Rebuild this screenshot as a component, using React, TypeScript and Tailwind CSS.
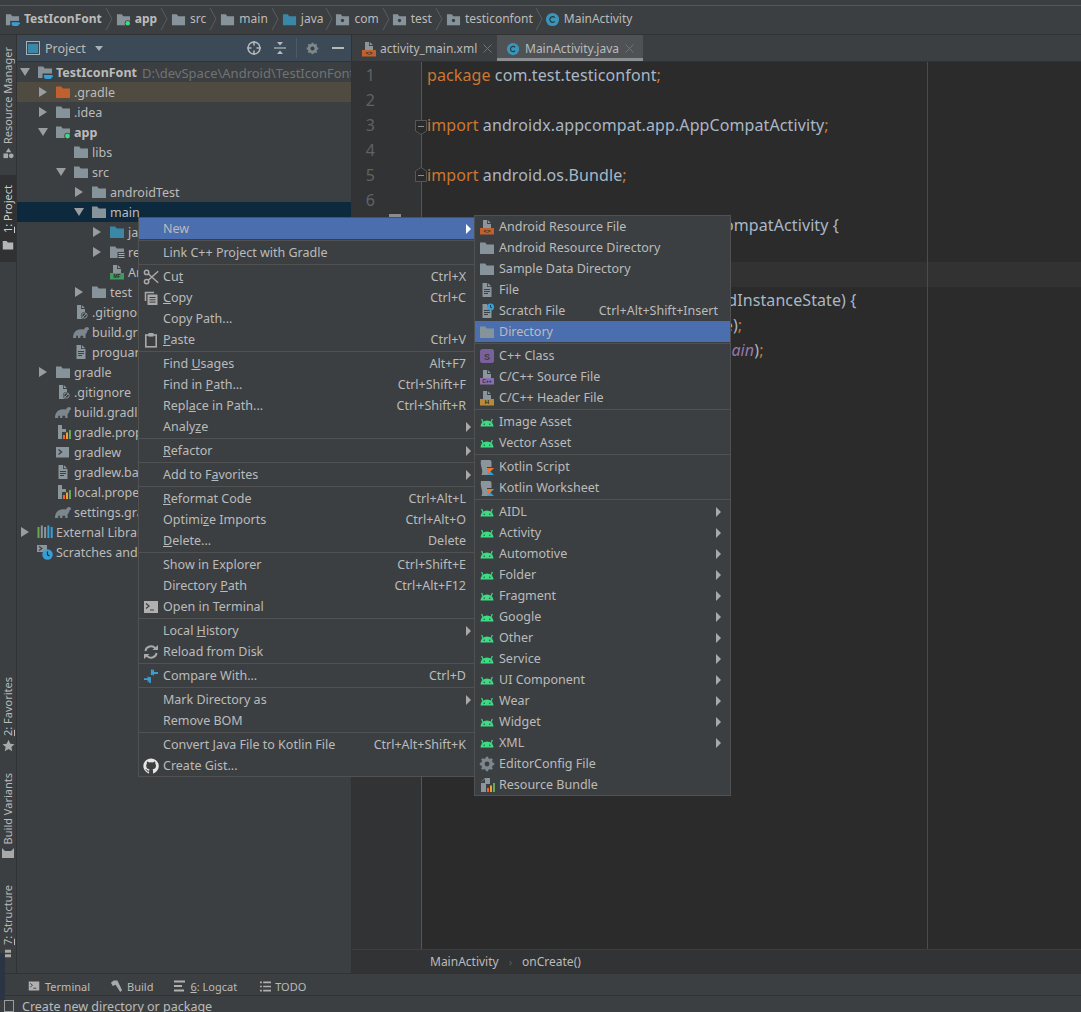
import React from "react";

type Kind =
  | "folder" | "blue" | "orange" | "pkg" | "res" | "module" | "root" | "manifest" | "ignore" | "gradle" | "doc"
  | "props" | "shell" | "libs" | "scratch" | "xml" | "cls" | "scratchFile" | "cppClass" | "cppSrc" | "cppHdr"
  | "android" | "kotlin" | "gear" | "bundle" | "cut" | "copy" | "paste" | "terminal" | "reload" | "compare" | "github";

const PageShape = ({fill = "#8a959c"}: {fill?: string}) => (
  <path d="M4 1h4v4h4V1.5L12 1v8H4zM8.8 1l3 3H8.8z" fill={fill} />
);

const FolderShape = ({fill = "#87939a"}: {fill?: string}) => (
  <path d="M1 2.5h5.2l1.5 2H15V14H1z" fill={fill} />
);

const DocLines = () => (
  <>
    <path d="M3.5 1H8v4h4.5v10h-9z" fill="#8a959c" />
    <path d="M8.8 1l3.5 3.3H8.8z" fill="#8a959c" />
    <path d="M5 7.5h6M5 9.5h6M5 11.5h4" stroke="#3c3f41" strokeWidth="1" />
  </>
);

const Bars = () => (
  <>
    <rect x="8" y="11" width="2" height="4" fill="#f26522" />
    <rect x="11" y="8.5" width="2" height="6.5" fill="#e8a33d" />
    <rect x="14" y="6" width="2" height="9" fill="#6aa84f" />
  </>
);

const Cup = () => (
  <>
    <path d="M7 11h8v1.5a2.5 2.5 0 0 1-2.5 2.5h-3A2.5 2.5 0 0 1 7 12.5z" fill="#389fd6" />
    <path d="M15 11.5h1.4v1.6H15z" fill="#389fd6" />
  </>
);

const Badge = ({fill, label, size = 5}: {fill: string; label: string; size?: number}) => (
  <>
    <PageShape />
    <rect x="1" y="9" width="14" height="6.5" fill={fill} />
    <text x="8" y="14.3" textAnchor="middle" fontSize={size} fontWeight="700" fill="#2b2b2b" fontFamily="Liberation Sans, sans-serif">
      {label}
    </text>
  </>
);

const Icon = ({kind, className = "w-[16px] h-[16px]"}: {kind: Kind; className?: string}) => {
  let body: React.ReactNode = null;
  switch (kind) {
    case "folder":
      body = <FolderShape />;
      break;
    case "blue":
      body = <FolderShape fill="#3b87a8" />;
      break;
    case "orange":
      body = <FolderShape fill="#c0602e" />;
      break;
    case "pkg":
      body = (
        <>
          <FolderShape />
          <circle cx="8" cy="9" r="1.8" fill="#3c3f41" />
        </>
      );
      break;
    case "res":
      body = (
        <>
          <FolderShape />
          <rect x="8.5" y="8" width="7.5" height="7.5" fill="#3c3f41" />
          <path d="M9.5 9.5h6M9.5 11.5h6M9.5 13.5h6" stroke="#e8a33d" strokeWidth="1.1" />
        </>
      );
      break;
    case "module":
      body = (
        <>
          <FolderShape />
          <circle cx="12.5" cy="12" r="3.2" fill="#3c3f41" />
          <circle cx="12.5" cy="12" r="2.4" fill="#3ddc84" />
        </>
      );
      break;
    case "root":
      body = (
        <>
          <FolderShape />
          <rect x="5.5" y="9.5" width="11" height="6.5" fill="#3c3f41" />
          <Cup />
        </>
      );
      break;
    case "manifest":
      body = <Badge fill="#3f9c5f" label="MF" />;
      break;
    case "ignore":
      body = (
        <>
          <PageShape />
          <path d="M4 8h6v7H4z" fill="#8a959c" />
          <circle cx="11.5" cy="11.5" r="3.6" fill="#3c3f41" />
          <circle cx="11.5" cy="11.5" r="2.7" fill="none" stroke="#8a959c" strokeWidth="1" />
          <path d="M9.7 13.4l3.6-3.8" stroke="#8a959c" strokeWidth="1" />
        </>
      );
      break;
    case "gradle":
      body = (
        <path
          d="M0 14c0-3 .8-6 3.4-7.6C6 5 8.6 5 11 5.5c.6-1.5 1.6-2.6 3-2.6 1.2 0 2 .8 2 1.9 0 .8-.5 1.4-1.4 1.4-.3 1.7-1 3-2 4V14h-2.4v-2.2H7.4V14H5v-2.3H3.2V14z"
          fill="#7b868d"
        />
      );
      break;
    case "doc":
      body = <DocLines />;
      break;
    case "props":
      body = (
        <>
          <path d="M3 1h4v4h4V1L11 5v3H7v7H3z" fill="#8a959c" />
          <Bars />
        </>
      );
      break;
    case "shell":
      body = (
        <>
          <rect x="1" y="3" width="13" height="10.5" fill="#8a959c" />
          <path d="M3.5 5.5l3 2.5-3 2.5" stroke="#3c3f41" strokeWidth="1.4" fill="none" />
        </>
      );
      break;
    case "libs":
      body = (
        <>
          <rect x="0.5" y="3" width="2" height="11" fill="#6aa84f" />
          <rect x="3.8" y="1.5" width="2" height="12.5" fill="#8a959c" />
          <rect x="7.1" y="3" width="2" height="11" fill="#8a959c" />
          <rect x="10.4" y="1.5" width="2" height="12.5" fill="#389fd6" />
          <rect x="13.7" y="3" width="2" height="11" fill="#389fd6" />
        </>
      );
      break;
    case "scratch":
      body = (
        <>
          <path d="M0 1h10v7H0z" fill="#8a959c" />
          <path d="M2 2.5l3 2-3 2" stroke="#3c3f41" strokeWidth="1.1" fill="none" />
          <circle cx="10.5" cy="10.5" r="5.2" fill="#389fd6" />
          <path d="M10.5 7.5v3.3l2 1.2" stroke="#2b2b2b" strokeWidth="1.2" fill="none" />
        </>
      );
      break;
    case "xml":
      body = <Badge fill="#c0602e" label="<>" size={6} />;
      break;
    case "cls":
      body = (
        <>
          <circle cx="8" cy="8" r="7" fill="#3a95b8" />
          <path d="M10.4 6a3 3 0 1 0 0 4" stroke="#2b3a42" strokeWidth="1.3" fill="none" />
        </>
      );
      break;
    case "scratchFile":
      body = (
        <>
          <DocLines />
          <circle cx="11.5" cy="4" r="3.6" fill="#389fd6" />
          <path d="M11.5 2v2.2l1.4.8" stroke="#2b2b2b" strokeWidth="0.9" fill="none" />
        </>
      );
      break;
    case "cppClass":
      body = (
        <>
          <rect x="1" y="1" width="14" height="14" rx="2.5" fill="#7a619c" />
          <text x="8" y="11.5" textAnchor="middle" fontSize="9" fontWeight="700" fill="#3c3f41" fontFamily="Liberation Sans, sans-serif">
            S
          </text>
        </>
      );
      break;
    case "cppSrc":
      body = <Badge fill="#8a6fb0" label="C++" />;
      break;
    case "cppHdr":
      body = <Badge fill="#b98a3c" label="H" size={6} />;
      break;
    case "android":
      body = (
        <>
          <path d="M1.500 12.500a6.500 6 0 0 1 13 0z" fill="#3ddc84" />
          <path d="M4 8L2.600 5M12 8l1.400-3" stroke="#3ddc84" strokeWidth="1.200" />
          <circle cx="5.200" cy="10.300" r="0.700" fill="#3c3f41" />
          <circle cx="10.800" cy="10.300" r="0.700" fill="#3c3f41" />
        </>
      );
      break;
    case "kotlin":
      body = (
        <>
          <path d="M2 1h8.5c1.5 0 2 1 2 2v5H8v8H2.5c.5-2 1-3 .5-5.5C2.6 8 1 5 2 1z" fill="#8a959c" />
          <path d="M8 9h7l-3.5 3.5L15 16H8z" fill="#389fd6" />
          <path d="M8 9h6.8L8 15.5z" fill="#f0752c" />
        </>
      );
      break;
    case "gear":
      body = (
        <>
          <circle cx="8" cy="8" r="4.4" fill="none" stroke="#7c878e" strokeWidth="3" />
          <path d="M8 0.8v14.4M0.8 8h14.4M2.9 2.9l10.2 10.2M13.1 2.9L2.9 13.1" stroke="#7c878e" strokeWidth="2.4" />
          <circle cx="8" cy="8" r="2.4" fill="#3c3f41" />
        </>
      );
      break;
    case "bundle":
      body = (
        <>
          <path d="M2 15V5l4-4h5v6H7v8z" fill="#8a959c" />
          <path d="M1 6h5V2z" fill="#3c3f41" />
          <Bars />
        </>
      );
      break;
    case "cut":
      body = (
        <>
          <circle cx="3.6" cy="3.4" r="2.2" fill="none" stroke="#a9a9a9" strokeWidth="1.5" />
          <circle cx="3.6" cy="12.6" r="2.2" fill="none" stroke="#a9a9a9" strokeWidth="1.5" />
          <path d="M5.2 4.8l10 9M5.2 11.2l10-9" stroke="#a9a9a9" strokeWidth="1.5" />
        </>
      );
      break;
    case "copy":
      body = (
        <>
          <path d="M2.5 11V2.5H11" stroke="#a9a9a9" strokeWidth="1.5" fill="none" />
          <rect x="4.5" y="4.5" width="10" height="10.5" fill="#a9a9a9" />
          <path d="M6.5 7.5h6M6.5 9.8h6M6.5 12.1h6" stroke="#3c3f41" strokeWidth="1" />
        </>
      );
      break;
    case "paste":
      body = (
        <>
          <rect x="2.8" y="3" width="10.4" height="11.8" fill="none" stroke="#a9a9a9" strokeWidth="1.6" />
          <rect x="5.5" y="1" width="5" height="3.6" fill="#a9a9a9" />
        </>
      );
      break;
    case "terminal":
      body = (
        <>
          <rect x="1" y="2" width="14" height="12" fill="#b0b0b0" />
          <path d="M3 4.5l3 2.5-3 2.5M7 11h4" stroke="#3c3f41" strokeWidth="1.2" fill="none" />
        </>
      );
      break;
    case "reload":
      body = (
        <>
          <path d="M2.4 7a5.7 5.7 0 0 1 10-2.6M13.6 9a5.7 5.7 0 0 1-10 2.6" stroke="#a9a9a9" strokeWidth="1.9" fill="none" />
          <path d="M9.5 6h5.5V1zM6.5 10H1v5z" fill="#a9a9a9" />
        </>
      );
      break;
    case "compare":
      body = (
        <>
          <path d="M8.8 7V1.5M8.8 5h6.2" stroke="#389fd6" strokeWidth="1.8" />
          <path d="M11 1l-3 3.8L11 8z" fill="#389fd6" />
          <path d="M7 15V9M1 11.2h5.5" stroke="#389fd6" strokeWidth="1.8" />
          <path d="M4.6 8l3 3.2-3 3.2z" fill="#389fd6" />
        </>
      );
      break;
    case "github":
      body = (
        <path
          d="M8 .4a7.7 7.7 0 0 0-2.4 15c.4.1.5-.2.5-.4v-1.4c-2.1.5-2.6-1-2.6-1-.3-.9-.8-1.100-.8-1.100-.7-.5.100-.5.100-.5.800.100 1.200.8 1.200.8.700 1.200 1.800.8 2.200.6.100-.5.300-.8.500-1-1.700-.2-3.500-.9-3.500-3.800 0-.8.300-1.500.8-2-.1-.2-.3-1 .1-2 0 0 .6-.2 2.100.8a7.300 7.300 0 0 1 3.800 0c1.500-1 2.100-.8 2.100-.8.400 1 .2 1.800.1 2 .5.500.8 1.200.8 2 0 2.900-1.800 3.600-3.500 3.800.3.200.5.700.5 1.400V15c0 .2.100.5.500.4A7.700 7.700 0 0 0 8 .4z"
          fill="#e6e6e6"
        />
      );
      break;
  }
  return (
    <svg viewBox="0 0 16 16" className={`shrink-0 ${className}`}>
      {body}
    </svg>
  );
};

const Arrow = ({open}: {open?: boolean}) =>
  open ? (
    <svg viewBox="0 0 10 8" className="w-[10px] h-[8px]">
      <path d="M0 0h10L5 8z" fill="#9a9da0" />
    </svg>
  ) : (
    <svg viewBox="0 0 8 10" className="w-[8px] h-[10px] ml-[1px]">
      <path d="M0 0v10l8-5z" fill="#9a9da0" />
    </svg>
  );

interface TreeRow {
  label: string;
  level: number;
  icon: Kind;
  arrow?: "open" | "closed";
  bold?: boolean;
  hint?: string;
  bg?: string;
}

const tree: TreeRow[] = [
  {label: "TestIconFont", level: 0, icon: "root", arrow: "open", bold: true, hint: "D:\\devSpace\\Android\\TestIconFont"},
  {label: ".gradle", level: 1, icon: "orange", arrow: "closed", bg: "bg-[#4f4b41]"},
  {label: ".idea", level: 1, icon: "folder", arrow: "closed"},
  {label: "app", level: 1, icon: "module", arrow: "open", bold: true},
  {label: "libs", level: 2, icon: "folder"},
  {label: "src", level: 2, icon: "folder", arrow: "open"},
  {label: "androidTest", level: 3, icon: "folder", arrow: "closed"},
  {label: "main", level: 3, icon: "folder", arrow: "open", bg: "bg-[#0d293e]"},
  {label: "java", level: 4, icon: "blue", arrow: "closed"},
  {label: "res", level: 4, icon: "res", arrow: "closed"},
  {label: "AndroidManifest.xml", level: 4, icon: "manifest"},
  {label: "test", level: 3, icon: "folder", arrow: "closed"},
  {label: ".gitignore", level: 2, icon: "ignore"},
  {label: "build.gradle", level: 2, icon: "gradle"},
  {label: "proguard-rules.pro", level: 2, icon: "doc"},
  {label: "gradle", level: 1, icon: "folder", arrow: "closed"},
  {label: ".gitignore", level: 1, icon: "ignore"},
  {label: "build.gradle", level: 1, icon: "gradle"},
  {label: "gradle.properties", level: 1, icon: "props"},
  {label: "gradlew", level: 1, icon: "shell"},
  {label: "gradlew.bat", level: 1, icon: "doc"},
  {label: "local.properties", level: 1, icon: "props"},
  {label: "settings.gradle", level: 1, icon: "gradle"},
  {label: "External Libraries", level: 0, icon: "libs", arrow: "closed"},
  {label: "Scratches and Consoles", level: 0, icon: "scratch"},
];

const indents = ["pl-0", "pl-[18px]", "pl-[36px]", "pl-[54px]", "pl-[72px]"];

interface MenuEntry {
  label: React.ReactNode;
  icon?: Kind;
  shortcut?: string;
  arrow?: boolean;
  selected?: boolean;
}

const SEP = "sep" as const;
type MenuLine = MenuEntry | typeof SEP;

const contextMenu: MenuLine[] = [
  {label: "New", arrow: true, selected: true},
  SEP,
  {label: "Link C++ Project with Gradle"},
  SEP,
  {label: <>Cu<u>t</u></>, icon: "cut", shortcut: "Ctrl+X"},
  {label: <><u>C</u>opy</>, icon: "copy", shortcut: "Ctrl+C"},
  {label: "Copy Path..."},
  {label: <><u>P</u>aste</>, icon: "paste", shortcut: "Ctrl+V"},
  SEP,
  {label: <>Find <u>U</u>sages</>, shortcut: "Alt+F7"},
  {label: <>Find in <u>P</u>ath...</>, shortcut: "Ctrl+Shift+F"},
  {label: <>Repl<u>a</u>ce in Path...</>, shortcut: "Ctrl+Shift+R"},
  {label: <>Analy<u>z</u>e</>, arrow: true},
  SEP,
  {label: <><u>R</u>efactor</>, arrow: true},
  SEP,
  {label: <>Add to F<u>a</u>vorites</>, arrow: true},
  SEP,
  {label: <><u>R</u>eformat Code</>, shortcut: "Ctrl+Alt+L"},
  {label: <>Optimi<u>z</u>e Imports</>, shortcut: "Ctrl+Alt+O"},
  {label: <><u>D</u>elete...</>, shortcut: "Delete"},
  SEP,
  {label: "Show in Explorer", shortcut: "Ctrl+Shift+E"},
  {label: <>Directory <u>P</u>ath</>, shortcut: "Ctrl+Alt+F12"},
  {label: "Open in Terminal", icon: "terminal"},
  SEP,
  {label: <>Local <u>H</u>istory</>, arrow: true},
  {label: "Reload from Disk", icon: "reload"},
  SEP,
  {label: "Compare With...", icon: "compare", shortcut: "Ctrl+D"},
  SEP,
  {label: "Mark Directory as", arrow: true},
  {label: "Remove BOM"},
  SEP,
  {label: "Convert Java File to Kotlin File", shortcut: "Ctrl+Alt+Shift+K"},
  {label: "Create Gist...", icon: "github"},
];

const newMenu: MenuLine[] = [
  {label: "Android Resource File", icon: "xml"},
  {label: "Android Resource Directory", icon: "folder"},
  {label: "Sample Data Directory", icon: "folder"},
  {label: "File", icon: "doc"},
  {label: "Scratch File", icon: "scratchFile", shortcut: "Ctrl+Alt+Shift+Insert"},
  {label: "Directory", icon: "folder", selected: true},
  SEP,
  {label: "C++ Class", icon: "cppClass"},
  {label: "C/C++ Source File", icon: "cppSrc"},
  {label: "C/C++ Header File", icon: "cppHdr"},
  SEP,
  {label: "Image Asset", icon: "android"},
  {label: "Vector Asset", icon: "android"},
  SEP,
  {label: "Kotlin Script", icon: "kotlin"},
  {label: "Kotlin Worksheet", icon: "kotlin"},
  SEP,
  {label: "AIDL", icon: "android", arrow: true},
  {label: "Activity", icon: "android", arrow: true},
  {label: "Automotive", icon: "android", arrow: true},
  {label: "Folder", icon: "android", arrow: true},
  {label: "Fragment", icon: "android", arrow: true},
  {label: "Google", icon: "android", arrow: true},
  {label: "Other", icon: "android", arrow: true},
  {label: "Service", icon: "android", arrow: true},
  {label: "UI Component", icon: "android", arrow: true},
  {label: "Wear", icon: "android", arrow: true},
  {label: "Widget", icon: "android", arrow: true},
  {label: "XML", icon: "android", arrow: true},
  {label: "EditorConfig File", icon: "gear"},
  {label: "Resource Bundle", icon: "bundle"},
];

const MenuArrow = ({light}: {light?: boolean}) => (
  <svg viewBox="0 0 5 10" className="w-[5px] h-[10px] shrink-0">
    <path d="M0 0v10l5-5z" fill={light ? "#ffffff" : "#a9a9a9"} />
  </svg>
);

const PopupMenu = ({lines, className, sub}: {lines: MenuLine[]; className: string; sub?: boolean}) => (
  <div className={`absolute bg-[#3c3f41] border border-[#515151] ${className}`}>
    {lines.map((line, i) =>
      line === SEP ? (
        <div key={i} className="h-[3px] flex items-center">
          <div className="h-px w-full bg-[#515151]" />
        </div>
      ) : (
        <div key={i} className={`h-[21px] flex items-center pr-[4px] ${line.selected ? "bg-[#4b6eaf]" : ""}`}>
          <span className="w-[24px] flex justify-center shrink-0">
            {line.icon && <Icon kind={line.icon} className="w-[16px] h-[16px]" />}
          </span>
          <span className="flex-1 whitespace-nowrap pt-[2px]">{line.label}</span>
          {line.shortcut && <span className={`whitespace-nowrap pt-[2px] ${sub ? "mr-[8px]" : "mr-[5px]"}`}>{line.shortcut}</span>}
          {line.arrow && <span className={sub ? "mr-[5px]" : "mr-0"}><MenuArrow light={line.selected} /></span>}
        </div>
      ),
    )}
  </div>
);

const Crumb = ({label, icon, bold}: {label: string; icon: Kind; bold?: boolean}) => (
  <div className="flex items-center">
    <Icon kind={icon} className="w-[15px] h-[15px] mr-[4px]" />
    <span className={bold ? "font-bold" : ""}>{label}</span>
  </div>
);

const CrumbSep = ({className = "mx-[3px]"}: {className?: string}) => (
  <svg viewBox="0 0 8 24" className={`w-[8px] h-[24px] ${className}`}>
    <path d="M1 1l6 11-6 11" stroke="#5a5d5f" fill="none" />
  </svg>
);

const TabClose = () => (
  <svg viewBox="0 0 9 9" className="w-[9px] h-[9px] ml-[6px]">
    <path d="M.5.5l8 8M8.500.5l-8 8" stroke="#6f7376" />
  </svg>
);

const V = "[writing-mode:vertical-rl] rotate-180 whitespace-nowrap mr-[2px]";

const SideStripe = () => (
  <div className="w-[17px] shrink-0 border-r border-[#323232] flex flex-col justify-between items-stretch text-[11px] leading-none">
    <div className="flex flex-col">
      <div className="pt-[12px] h-[140px] flex flex-col items-center">
        <span className={V}>Resource Manager</span>
        <svg viewBox="0 0 12 12" className="w-[11px] h-[11px] mt-[4px]">
          <path d="M6 0l3 4.500H3z" fill="#a9a9a9" />
          <rect x="0.500" y="6" width="5" height="5" fill="#a9a9a9" />
          <circle cx="9" cy="8.500" r="2.600" fill="#a9a9a9" />
        </svg>
      </div>
      <div className="h-[87px] bg-[#2f3133] pt-[10px] flex flex-col items-center text-[#d0d0d0]">
        <span className={V}>
          <u>1</u>: Project
        </span>
        <svg viewBox="0 0 16 16" className="w-[12px] h-[12px] mt-[6px]">
          <path d="M1 2.500h5.200l1.500 2H15V14H1z" fill="#b5b5b5" />
        </svg>
      </div>
    </div>
    <div className="flex flex-col items-center pb-[15px]">
      <span className={V}>
        <u>2</u>: Favorites
      </span>
      <svg viewBox="0 0 16 16" className="w-[13px] h-[13px] mt-[3px]">
        <path d="M8 1l2.200 4.800 5.200.6-3.900 3.500 1.100 5.200L8 12.400l-4.600 2.700 1.100-5.200L.6 6.400l5.200-.6z" fill="#a9a9a9" />
      </svg>
      <span className={`${V} mt-[21px]`}>Build Variants</span>
      <svg viewBox="0 0 12 10" className="w-[12px] h-[10px] mt-[4px]">
        <path d="M0 0l3 3h6l3-3v10H0z" fill="#a9a9a9" />
      </svg>
      <span className={`${V} mt-[27px]`}>
        <u>7</u>: Structure
      </span>
      <svg viewBox="0 0 8 10" className="w-[6px] h-[9px] mt-[4px]">
        <rect x="0" y="0" width="8" height="4" fill="#a9a9a9" />
        <rect x="0" y="6" width="8" height="4" fill="#a9a9a9" />
      </svg>
    </div>
  </div>
);

const ProjectPanel = () => (
  <div className="w-[334px] shrink-0 flex flex-col">
    <div className="h-[27px] bg-[#3c4a57] flex items-center pl-[9px] pr-[7px] border-b border-[#323232]">
      <svg viewBox="0 0 14 14" className="w-[14px] h-[14px] mr-[5px]">
        <rect x="0.500" y="0.500" width="13" height="13" fill="none" stroke="#a9b0b5" />
        <rect x="2" y="3" width="10" height="9" fill="#3b87a8" />
      </svg>
      <span className="pt-[2px]">Project</span>
      <svg viewBox="0 0 8 5" className="w-[8px] h-[5px] ml-[9px]">
        <path d="M0 0h8L4 5z" fill="#a9b0b5" />
      </svg>
      <div className="flex-1" />
      <svg viewBox="0 0 14 14" className="w-[14px] h-[14px]">
        <circle cx="7" cy="7" r="6" fill="none" stroke="#b5b8ba" strokeWidth="1.500" />
        <path d="M7 0v4.500M7 9.500V14M0 7h4.500M9.500 7H14" stroke="#b5b8ba" strokeWidth="1.500" />
      </svg>
      <svg viewBox="0 0 14 14" className="w-[14px] h-[14px] ml-[12px]">
        <path d="M1 7h12" stroke="#b5b8ba" strokeWidth="1.200" />
        <path d="M4 1l3 3.500L10 1zM4 13l3-3.500 3 3.500z" fill="#b5b8ba" />
      </svg>
      <div className="w-px h-[20px] bg-[#4d5963] mx-[9px]" />
      <Icon kind="gear" className="w-[13px] h-[13px]" />
      <div className="w-[12px] h-[2px] bg-[#b5b8ba] ml-[13px]" />
    </div>
    <div className="flex flex-col">
      {tree.map((row, i) => (
        <div key={i} className={`h-[20px] flex items-center whitespace-nowrap ${row.bg ?? ""}`}>
          <div className={`flex items-center ${indents[row.level]}`}>
            <span className="w-[20px] pl-[3px] flex items-center shrink-0">
              {row.arrow && <Arrow open={row.arrow === "open"} />}
            </span>
            <span className="w-[19px] shrink-0">
              <Icon kind={row.icon} className="w-[16px] h-[16px]" />
            </span>
            <span className={`pt-[2px] ${row.bold ? "font-bold" : ""}`}>{row.label}</span>
            {row.hint && <span className="ml-[5px] pt-[2px] text-[13px] text-[#6f7376]">{row.hint}</span>}
          </div>
        </div>
      ))}
    </div>
  </div>
);

const Kw = ({children}: {children: React.ReactNode}) => <span className="text-[#cc7832]">{children}</span>;

const codeLines: {content: React.ReactNode; indent?: string; current?: boolean}[] = [
  {content: <><Kw>package</Kw> com.test.testiconfont<Kw>;</Kw></>},
  {content: ""},
  {content: <><Kw>import</Kw> androidx.appcompat.app.AppCompatActivity<Kw>;</Kw></>},
  {content: ""},
  {content: <><Kw>import</Kw> android.os.Bundle<Kw>;</Kw></>},
  {content: ""},
  {content: <><Kw>public class</Kw> MainActivity <Kw>extends</Kw> AppCompatActivity {"{"}</>, indent: "pl-[4px]"},
  {content: ""},
  {content: "", current: true},
  {content: <><Kw>protected void</Kw> onCreate(Bundle savedInstanceState) {"{"}</>, indent: "pl-[19px]"},
  {content: <><Kw>super</Kw>.onCreate(savedInstanceState)<Kw>;</Kw></>, indent: "pl-[38px]"},
  {content: <>setContentView(R.layout.<i className="text-[#9876aa]">activity_main</i>)<Kw>;</Kw></>, indent: "pl-[43px]"},
];

const FoldMark = ({up}: {up?: boolean}) => (
  <svg viewBox="0 0 12 15" className={`absolute left-[-7px] w-[12px] h-[15px] ${up ? "top-[5px]" : "top-[8px]"}`}>
    <path
      d={up ? "M.5 14.500V4L6 .5 11.500 4v10.500z" : "M.5.5h11V11L6 14.500.5 11z"}
      fill="#2b2b2b"
      stroke="#555759"
    />
    <path d={up ? "M3 8.500h6" : "M3 6.500h6"} stroke="#8a8d8f" />
  </svg>
);

const Editor = () => (
  <div className="flex-1 min-w-0 flex flex-col border-l border-[#323232]">
    <div className="h-[27px] flex items-stretch shrink-0 border-b border-[#323232] text-[12px]">
      <div className="w-[145px] flex items-center pl-[9px] pt-[1px]">
        <Icon kind="xml" className="w-[16px] h-[16px] mr-[3px]" />
        <span>activity_main.xml</span>
        <TabClose />
      </div>
      <div className="w-[146px] relative flex items-center pl-[9px] pt-[1px] bg-[#4e5254]">
        <Icon kind="cls" className="w-[14px] h-[14px] mr-[5px]" />
        <span>MainActivity.java</span>
        <TabClose />
        <div className="absolute left-0 right-0 bottom-0 h-[3px] bg-[#8c8f91]" />
      </div>
    </div>
    <div className="flex-1 flex min-h-0 bg-[#2b2b2b] relative text-[16px] leading-[27px] text-[#a9b7c6]">
      <div className="w-[70px] shrink-0 bg-[#313335] border-r border-[#555759] text-[#606366] relative">
        {[1, 2, 3, 4, 5, 6].map((n) => (
          <div key={n} className="h-[25px] text-right pr-[46px]">
            {n}
          </div>
        ))}
        <div className="absolute left-[37px] top-[152px] w-[12px] h-[4px] bg-[#8a8d8f]" />
      </div>
      <div className="flex-1 min-w-0 tracking-[0.1px]">
        {codeLines.map((line, i) => (
          <div
            key={i}
            className={`relative h-[25px] pl-[5px] whitespace-nowrap ${line.current ? "bg-[#323232]" : ""}`}
          >
            {i === 2 && <FoldMark />}
            {i === 4 && <FoldMark up />}
            <span className={line.indent}>{line.content}</span>
          </div>
        ))}
      </div>
      <div className="absolute left-[575px] top-0 bottom-0 w-px bg-[#4a4c4e]" />
    </div>
    <div className="h-[24px] shrink-0 bg-[#313335] border-t border-[#3c3e40] flex items-center pl-[78px] text-[12px]">
      <span>MainActivity</span>
      <span className="mx-[10px] text-[#5a5d5f] text-[11px]">›</span>
      <span>onCreate()</span>
    </div>
  </div>
);

export default function App() {
  return (
    <div className="relative w-[1081px] h-[1012px] overflow-hidden flex flex-col bg-[#3c3f41] text-[#bbbbbb] text-[12.5px] leading-none font-['Noto_Sans',sans-serif]">
      <div className="h-[6px] shrink-0 border-b border-[#555759]" />
      <div className="h-[29px] shrink-0 flex items-center pl-[5px] pb-[2px] border-b border-[#323232] text-[12px]">
        <Crumb label="TestIconFont" icon="root" bold />
        <CrumbSep />
        <Crumb label="app" icon="module" bold />
        <CrumbSep />
        <Crumb label="src" icon="folder" />
        <CrumbSep />
        <Crumb label="main" icon="folder" />
        <CrumbSep />
        <Crumb label="java" icon="blue" />
        <CrumbSep className="mx-[2px]" />
        <Crumb label="com" icon="pkg" />
        <CrumbSep className="ml-[3px] mr-[2px]" />
        <Crumb label="test" icon="pkg" />
        <CrumbSep />
        <Crumb label="testiconfont" icon="pkg" />
        <CrumbSep className="mx-[2px]" />
        <Crumb label="MainActivity" icon="cls" />
      </div>
      <div className="flex-1 min-h-0 flex">
        <SideStripe />
        <ProjectPanel />
        <Editor />
      </div>
      <div className="h-[22px] shrink-0 border-t border-[#323232] flex items-center text-[11px] pl-[28px] pt-[3px]">
        <Icon kind="terminal" className="w-[12px] h-[12px] mr-[5px]" />
        <span>Terminal</span>
        <svg viewBox="0 0 14 14" className="w-[13px] h-[13px] ml-[20px] mr-[4px]">
          <path d="M1 3l3-2.500h4l5 10.500-2 2-5-8L3 6.500z" fill="#a9a9a9" />
        </svg>
        <span>Build</span>
        <svg viewBox="0 0 12 12" className="w-[12px] h-[12px] ml-[21px] mr-[4px]">
          <path d="M0 1.500h11M0 6h8M0 10.500h10" stroke="#b0b0b0" strokeWidth="1.800" />
        </svg>
        <span>
          <u>6</u>: Logcat
        </span>
        <svg viewBox="0 0 12 12" className="w-[11px] h-[11px] ml-[23px] mr-[4px]">
          <path d="M0 1.500h2M0 6h2M0 10.500h2M3.500 1.500H12M3.500 6H12M3.500 10.500H12" stroke="#b0b0b0" strokeWidth="1.800" />
        </svg>
        <span>TODO</span>
      </div>
      <div className="h-[17px] shrink-0 border-t border-[#323232] flex items-center pl-[22px] pt-[6px]">
        <span>Create new directory or package</span>
      </div>

      <PopupMenu lines={contextMenu} className="left-[138px] top-[217px] w-[338px]" />
      <PopupMenu lines={newMenu} className="left-[474px] top-[215px] w-[257px]" sub />

      <div className="absolute left-0 top-[953px] w-[5px] h-[47px] bg-[#2a3442] rounded-tr-[2px]" />
      <div className="absolute left-[4px] top-[1000px] w-[10px] h-[12px] border border-[#9a9da0]" />
    </div>
  );
}
